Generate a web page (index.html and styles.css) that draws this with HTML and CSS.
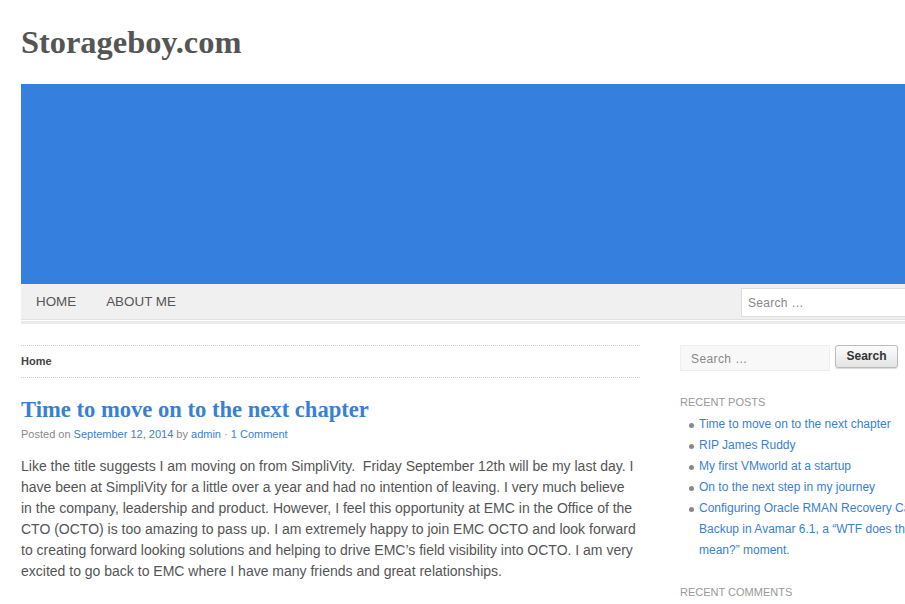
FILE: index.html
```html
<!DOCTYPE html>
<html>
<head>
<meta charset="utf-8">
<link rel="stylesheet" href="styles.css">
</head>
<body>
<div class="page">
  <header class="site-header">
    <h1 class="site-title">Storageboy.com</h1>
  </header>
  <div class="banner"></div>
  <nav class="nav">
    <ul class="menu">
      <li>HOME</li>
      <li>ABOUT ME</li>
    </ul>
    <div class="nav-search">Search …</div>
  </nav>
  <div class="nav-rule"></div>
  <div class="content">
    <main class="main">
      <div class="breadcrumb">Home</div>
      <article class="post">
        <h2 class="post-title">Time to move on to the next chapter</h2>
        <div class="meta">Posted on <a>September 12, 2014</a> by <a>admin</a> · <a>1 Comment</a></div>
        <p class="entry">Like the title suggests I am moving on from SimpliVity.&nbsp; Friday September 12th will be my last day. I have been at SimpliVity for a little over a year and had no intention of leaving. I very much believe in the company, leadership and product. However, I feel this opportunity at EMC in the Office of the CTO (OCTO) is too amazing to pass up. I am extremely happy to join EMC OCTO and look forward to creating forward looking solutions and helping to drive EMC’s field visibility into OCTO. I am very excited to go back to EMC where I have many friends and great relationships.</p>
      </article>
    </main>
    <aside class="sidebar">
      <div class="side-search">
        <div class="side-input">Search …</div>
        <div class="side-btn">Search</div>
      </div>
      <h3 class="widget-title">Recent Posts</h3>
      <ul class="recent">
        <li><a>Time to move on to the next chapter</a></li>
        <li><a>RIP James Ruddy</a></li>
        <li><a>My first VMworld at a startup</a></li>
        <li><a>On to the next step in my journey</a></li>
        <li><a>Configuring Oracle RMAN Recovery Catalog Backup in Avamar 6.1, a “WTF does that mean?” moment.</a></li>
      </ul>
      <h3 class="widget-title">Recent Comments</h3>
    </aside>
  </div>
</div>
</body>
</html>
```
FILE: styles.css
```css
html, body {
  margin: 0;
  padding: 0;
  background: #fff;
  overflow: hidden;
}
body {
  font-family: "Liberation Sans", Arial, sans-serif;
  color: #555;
}
.page {
  margin-left: 21px;
  width: 960px;
}
.site-header {
  height: 84px;
  box-sizing: border-box;
  padding-top: 24px;
}
.site-title {
  margin: 0;
  font-family: "Liberation Serif", serif;
  font-weight: bold;
  font-size: 32.4px;
  line-height: 36px;
  color: #555;
}
.banner {
  height: 200px;
  background: #3580de;
}
.nav {
  height: 35px;
  background: #f0f0f0;
  border-bottom: 1px solid #e0e0e0;
  display: flex;
  justify-content: space-between;
  align-items: center;
}
.menu {
  list-style: none;
  margin: 0;
  padding: 0 0 0 15px;
  display: flex;
  gap: 30px;
  font-size: 13.4px;
  color: #555;
}
.nav-search {
  width: 200px;
  height: 29px;
  margin-right: 40px;
  margin-top: 1px;
  box-sizing: border-box;
  background: #fff;
  border: 1px solid #ddd;
  font-size: 12px;
  color: #888;
  padding: 7px 0 0 6px;
  letter-spacing: 0.3px;
}
.nav-rule {
  height: 3px;
  margin-top: 1px;
  background: #ebebeb;
}
.content {
  display: flex;
  padding-top: 21px;
}
.main {
  width: 619px;
}
.breadcrumb {
  border-top: 1px dotted #ccc;
  border-bottom: 1px dotted #ccc;
  font-size: 11px;
  font-weight: bold;
  color: #444;
  height: 31px;
  line-height: 31px;
}
.post-title {
  margin: 18px 0 0;
  font-family: "Liberation Serif", serif;
  font-weight: bold;
  font-size: 22.6px;
  line-height: 28px;
  color: #3a7fd6;
}
.meta {
  font-size: 11px;
  color: #888;
  margin-top: 2px;
  line-height: 16px;
}
.meta a, .recent a {
  color: #3a7fd6;
}
.entry {
  margin: 14px 2px 0 0;
  font-size: 14px;
  line-height: 21px;
  color: #555;
}
.sidebar {
  margin-left: 40px;
  width: 300px;
}
.side-search {
  display: flex;
  gap: 5px;
  align-items: flex-start;
}
.side-input {
  width: 150px;
  height: 26px;
  box-sizing: border-box;
  background: #f8f8f8;
  border: 1px solid #eee;
  font-size: 12px;
  color: #888;
  padding: 6px 0 0 10px;
  letter-spacing: 0.4px;
}
.side-btn {
  width: 63px;
  height: 23px;
  box-sizing: border-box;
  border: 1px solid #bbb;
  border-radius: 3px;
  background: linear-gradient(#fcfcfc, #e4e4e4);
  font-size: 12px;
  font-weight: bold;
  color: #333;
  text-align: center;
  line-height: 20px;
  box-shadow: 0 1px 1px rgba(0,0,0,0.15);
}
.widget-title {
  margin: 24px 0 0;
  font-size: 11px;
  font-weight: normal;
  text-transform: uppercase;
  color: #999;
  line-height: 14px;
}
.recent {
  list-style: none;
  margin: 5px 0 0;
  padding: 0 0 0 19px;
  font-size: 12px;
  line-height: 21px;
  width: 245px;
}
.recent li {
  position: relative;
}
.recent li::before {
  content: "";
  position: absolute;
  left: -10px;
  top: 9px;
  width: 5px;
  height: 5px;
  border-radius: 50%;
  background: #888;
}
.recent + .widget-title {
  margin-top: 24px;
}
```
